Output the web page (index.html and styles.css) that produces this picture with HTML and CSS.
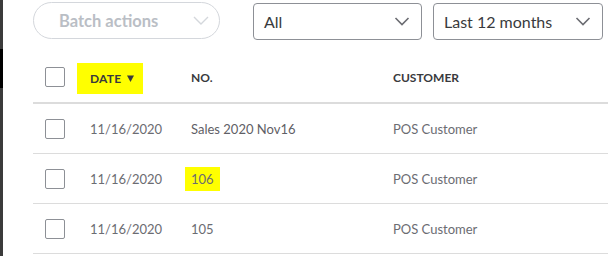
FILE: index.html
```html
<!DOCTYPE html>
<html>
<head>
<meta charset="utf-8">
<link rel="stylesheet" href="styles.css">
</head>
<body>
<div class="edge"><div class="edge-dark"></div></div>
<div class="main">
  <div class="toolbar">
    <div class="pill">
      <span class="pill-text">Batch actions</span>
      <svg class="chev" width="16" height="9" viewBox="0 0 16 9"><path d="M1 1 L8 8 L15 1" fill="none" stroke="#d4d7dc" stroke-width="1.4"/></svg>
    </div>
    <div class="select sel-all">
      <span>All</span>
      <svg class="chev" width="16" height="9" viewBox="0 0 16 9"><path d="M1.5 1 L8 7.5 L14.5 1" fill="none" stroke="#6b6c72" stroke-width="1.6"/></svg>
    </div>
    <div class="select sel-period">
      <span>Last 12 months</span>
      <svg class="chev" width="16" height="9" viewBox="0 0 16 9"><path d="M1.5 1 L8 7.5 L14.5 1" fill="none" stroke="#6b6c72" stroke-width="1.6"/></svg>
    </div>
  </div>
  <div class="table">
    <div class="row head">
      <div class="cell c-check"><span class="box"></span></div>
      <div class="cell c-date"><span class="hl-date">DATE <svg class="tri" width="7" height="7" viewBox="0 0 7 7"><path d="M0 0.5 H7 L3.5 7 Z" fill="#393a3d"/></svg></span></div>
      <div class="cell c-no">NO.</div>
      <div class="cell c-cust">CUSTOMER</div>
    </div>
    <div class="row">
      <div class="cell c-check"><span class="box"></span></div>
      <div class="cell c-date">11/16/2020</div>
      <div class="cell c-no dark">Sales 2020 Nov16</div>
      <div class="cell c-cust">POS Customer</div>
    </div>
    <div class="row">
      <div class="cell c-check"><span class="box"></span></div>
      <div class="cell c-date">11/16/2020</div>
      <div class="cell c-no"><span class="hl-no">106</span></div>
      <div class="cell c-cust">POS Customer</div>
    </div>
    <div class="row">
      <div class="cell c-check"><span class="box"></span></div>
      <div class="cell c-date">11/16/2020</div>
      <div class="cell c-no">105</div>
      <div class="cell c-cust">POS Customer</div>
    </div>
  </div>
</div>
</body>
</html>
```
FILE: styles.css
```css
html, body {
  margin: 0;
  padding: 0;
  background: #fff;
  height: 256px;
  overflow: hidden;
}
body {
  display: flex;
  font-family: Lato, "Open Sans", sans-serif;
}
.edge {
  width: 3px;
  height: 256px;
  background: #3b3b3b;
  padding-top: 49px;
  box-sizing: border-box;
  flex: none;
}
.edge-dark {
  height: 39px;
  background: #000;
}
.main {
  flex: 1;
  padding-left: 30px;
}
.toolbar {
  display: flex;
  padding-top: 2px;
  height: 38px;
}
.pill {
  width: 187px;
  height: 37px;
  box-sizing: border-box;
  border: 1px solid #d4d7dc;
  border-radius: 19px;
  display: flex;
  align-items: center;
  padding: 0 10px 0 25px;
  justify-content: space-between;
}
.pill-text {
  color: #babec5;
  font-weight: 700;
  font-size: 16.5px;
}
.select {
  height: 37px;
  margin-top: 1px;
  box-sizing: border-box;
  border: 1px solid #8d9096;
  border-radius: 4px;
  display: flex;
  align-items: center;
  justify-content: space-between;
  padding: 0 11px 0 10px;
  font-size: 16px;
  color: #393a3d;
}
.sel-all {
  width: 169px;
  margin-left: 33px;
}
.sel-period {
  width: 170px;
  margin-left: 11px;
}
.chev { display: block; }
.table {
  margin-top: 12px;
}
.row {
  display: grid;
  grid-template-columns: 57px 101px 202px 1fr;
  height: 49px;
  align-items: center;
  border-bottom: 1px solid #dcdcdc;
  font-size: 13px;
  color: #6b6c72;
}
.row.head {
  height: 50px;
  border-bottom: 2px solid #dcdcdc;
  color: #393a3d;
  font-size: 12px;
  font-weight: 700;
}
.cell { white-space: nowrap; }
.c-check { padding-left: 12px; display: flex; }
.box {
  width: 20px;
  height: 20px;
  box-sizing: border-box;
  border: 1px solid #8d9096;
  border-radius: 2px;
  display: block;
}
.hl-date {
  display: inline-flex;
  align-items: center;
  background: #ffff00;
  height: 31px;
  padding: 0 9px 0 13px;
  margin-left: -13px;
  margin-top: 2px;
  letter-spacing: 0.2px;
}
.tri { display: block; margin-left: 6px; }
.hl-no {
  display: inline-block;
  background: #ffff00;
  padding: 4px 6px;
  margin-left: -6px;
}
.dark { color: #5f6066; }
```
